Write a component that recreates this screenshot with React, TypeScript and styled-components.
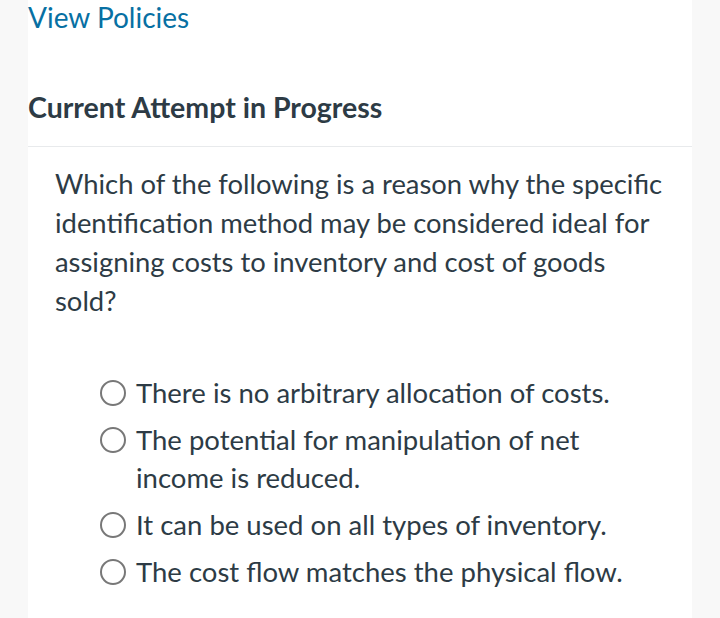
import React, { FC } from "react";
import styled, { createGlobalStyle } from "styled-components";

const GlobalStyle = createGlobalStyle`
  html, body {
    margin: 0;
    padding: 0;
    background: #f8f8f8;
    font-family: Lato, "Noto Sans", sans-serif;
    color: #2d3b45;
  }
`;

const Page = styled.main`
  margin: 0 28px;
  min-height: 618px;
  background: #ffffff;
`;

const PolicyLink = styled.a`
  display: block;
  font-size: 28px;
  line-height: 34px;
  color: #0770a3;
  text-decoration: none;
`;

const Heading = styled.h2`
  margin: 0;
  padding: 56px 0 22px;
  font-size: 28.5px;
  line-height: 34px;
  font-weight: 700;
  color: #2d3b45;
  border-bottom: 1px solid #e8eaec;
`;

const Question = styled.div`
  padding: 17px 28px 0 27px;
`;

const Prompt = styled.p`
  margin: 0;
  font-size: 27.4px;
  line-height: 39px;
`;

const Options = styled.ul`
  list-style: none;
  margin: 0;
  padding: 54px 0 0 45px;
  display: flex;
  flex-direction: column;
  gap: 9px;
`;

const Option = styled.li`
  display: flex;
  align-items: flex-start;
  gap: 10px;
  font-size: 27.5px;
  line-height: 38px;
`;

const Radio = styled.span`
  flex: none;
  box-sizing: border-box;
  width: 26px;
  height: 26px;
  margin-top: 6px;
  border: 2px solid #787878;
  border-radius: 50%;
  background: #fff;
`;

const choices = [
  "There is no arbitrary allocation of costs.",
  "The potential for manipulation of net income is reduced.",
  "It can be used on all types of inventory.",
  "The cost flow matches the physical flow.",
];

const App: FC = () => (
  <>
    <GlobalStyle />
    <Page>
      <PolicyLink href="#">View Policies</PolicyLink>
      <Heading>Current Attempt in Progress</Heading>
      <Question>
        <Prompt>
          Which of the following is a reason why the specific identification
          method may be considered ideal for assigning costs to inventory and
          cost of goods sold?
        </Prompt>
        <Options>
          {choices.map((c) => (
            <Option key={c}>
              <Radio />
              <span>{c}</span>
            </Option>
          ))}
        </Options>
      </Question>
    </Page>
  </>
);

export default App;
